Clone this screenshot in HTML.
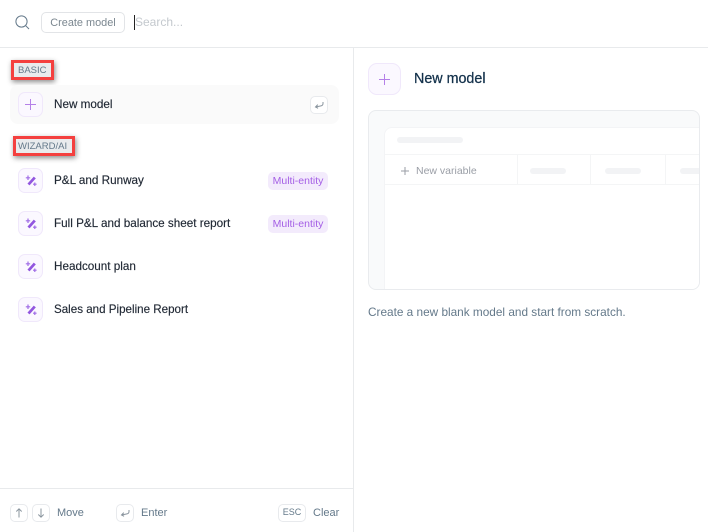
<!DOCTYPE html>
<html><head><meta charset="utf-8">
<style>
html,body{margin:0;padding:0;background:#fff}
#p{position:relative;width:708px;height:532px;overflow:hidden;background:#fff;font-family:"Liberation Sans",sans-serif;color:#1f2733}
#p div,#p svg{position:absolute}
.t{white-space:nowrap;line-height:16px;font-size:11.7px;-webkit-text-stroke:.15px currentColor}
.ic{left:18px;width:25px;height:25px;box-sizing:border-box;border:1px solid #f0e8fb;border-radius:7px;background:#fbf8ff}
.tag{left:268px;width:60px;height:18px;border-radius:5px;background:#f3ebfc;color:#a45ee5;font-size:10.5px;line-height:18px;text-align:center;white-space:nowrap}
.key{box-sizing:border-box;border:1px solid #e8eaed;border-radius:5px;background:#fff;height:18px}
.gr{color:#64798a}
.f{font-size:11px;-webkit-text-stroke:0}
.lab{font-size:9.5px;color:#64798a;white-space:nowrap;background:#e9ebed;line-height:15px}
.red{box-sizing:border-box;border:3px solid #f4403f;box-shadow:1px 2px 5px rgba(0,0,0,.45)}
.sk{background:#f2f3f5;border-radius:3px;height:6px}
</style></head><body><div id="p">

<svg style="left:14px;top:14px" width="17" height="17" viewBox="0 0 17 17" fill="none" stroke="#64798a" stroke-width="1"><circle cx="7.500" cy="7.500" r="5.600"/><path d="M11.700 11.700L15 15"/></svg>
<div class="t" style="left:41px;top:12px;width:84px;height:21px;box-sizing:border-box;border:1px solid #e2e4e7;border-radius:5px;font-size:10.900px;line-height:20px;text-align:center;color:#7b8790;-webkit-text-stroke:0">Create model</div>
<div style="left:134px;top:15px;width:1px;height:15px;background:#222"></div>
<div class="t" style="left:135px;top:14px;font-size:12px;color:#c4c9ce;-webkit-text-stroke:0">Search...</div>
<div style="left:0;top:47px;width:708px;height:1px;background:#e8eaec"></div>
<div style="left:353px;top:48px;width:1px;height:484px;background:#e8eaec"></div>
<div style="left:0;top:488px;width:353px;height:1px;background:#e8eaec"></div>

<div class="red" style="left:11px;top:60px;width:43px;height:20px"></div>
<div class="lab" style="left:14px;top:63px;width:37px;height:14px;text-indent:4px">BASIC</div>
<div style="left:10px;top:85px;width:329px;height:39px;background:#fafafa;border-radius:8px"></div>
<div class="ic" style="top:92px"></div>
<svg style="left:18px;top:92px" width="25" height="25" fill="none" stroke="#b580e8" stroke-width="1"><path d="M12.500 7v11M7 12.500h11"/></svg>
<div class="t" style="left:54px;top:97px">New model</div>
<div class="key" style="left:310px;top:96px;width:18px"></div>
<svg style="left:310px;top:96px" width="18" height="18" fill="none" stroke="#8a959e" stroke-width="1"><path d="M13 6v1.500q0 2-2 2.400L5.500 11M7.800 8.600L5.500 11l2.600 1.300"/></svg>

<div class="red" style="left:13px;top:136px;width:62px;height:20px"></div>
<div class="lab" style="left:16px;top:139px;width:56px;height:14px;text-indent:2px">WIZARD/AI</div>

<div class="ic" style="top:168px"></div>
<svg style="left:18px;top:168px" width="25" height="25" fill="none"><path d="M10.500 16.500L16.800 9.500" stroke="#9256df" stroke-width="2.800"/><path d="M10 7.500v4.500M7.800 9.800h4.400M16.800 14.500v3.500M15 16.200h3.600" stroke="#a06ce6" stroke-width="1.200"/></svg>
<div class="t" style="left:54px;top:173px">P&amp;L and Runway</div>
<div class="tag" style="top:172px">Multi-entity</div>

<div class="ic" style="top:211px"></div>
<svg style="left:18px;top:211px" width="25" height="25" fill="none"><path d="M10.500 16.500L16.800 9.500" stroke="#9256df" stroke-width="2.800"/><path d="M10 7.500v4.500M7.800 9.800h4.400M16.800 14.500v3.500M15 16.200h3.600" stroke="#a06ce6" stroke-width="1.200"/></svg>
<div class="t" style="left:54px;top:216px">Full P&amp;L and balance sheet report</div>
<div class="tag" style="top:215px">Multi-entity</div>

<div class="ic" style="top:254px"></div>
<svg style="left:18px;top:254px" width="25" height="25" fill="none"><path d="M10.500 16.500L16.800 9.500" stroke="#9256df" stroke-width="2.800"/><path d="M10 7.500v4.500M7.800 9.800h4.400M16.800 14.500v3.500M15 16.200h3.600" stroke="#a06ce6" stroke-width="1.200"/></svg>
<div class="t" style="left:54px;top:259px">Headcount plan</div>

<div class="ic" style="top:297px"></div>
<svg style="left:18px;top:297px" width="25" height="25" fill="none"><path d="M10.500 16.500L16.800 9.500" stroke="#9256df" stroke-width="2.800"/><path d="M10 7.500v4.500M7.800 9.800h4.400M16.800 14.500v3.500M15 16.200h3.600" stroke="#a06ce6" stroke-width="1.200"/></svg>
<div class="t" style="left:54px;top:302px;font-size:11.600px">Sales and Pipeline Report</div>

<div class="key" style="left:10px;top:504px;width:18px"></div>
<svg style="left:10px;top:504px" width="18" height="18" fill="none" stroke="#8a959e" stroke-width="1"><path d="M9 13.500V4.800M6.300 7.500L9 4.800l2.700 2.700"/></svg>
<div class="key" style="left:32px;top:504px;width:18px"></div>
<svg style="left:32px;top:504px" width="18" height="18" fill="none" stroke="#8a959e" stroke-width="1"><path d="M9 4.500v8.700M6.300 10.500L9 13.200l2.700-2.700"/></svg>
<div class="t gr f" style="left:57px;top:505px">Move</div>
<div class="key" style="left:116px;top:504px;width:18px"></div>
<svg style="left:116px;top:504px" width="18" height="18" fill="none" stroke="#8a959e" stroke-width="1"><path d="M13 6v1.500q0 2-2 2.400L5.500 11M7.800 8.600L5.500 11l2.600 1.300"/></svg>
<div class="t gr f" style="left:141px;top:505px">Enter</div>
<div class="key" style="left:278px;top:504px;width:28px;font-size:9px;line-height:14px;text-align:center;color:#64798a">ESC</div>
<div class="t gr f" style="left:313px;top:505px">Clear</div>

<div class="ic" style="left:368px;top:63px;width:33px;height:32px;border-radius:9px"></div>
<svg style="left:368px;top:63px" width="33" height="32" fill="none" stroke="#b580e8" stroke-width="1"><path d="M16.500 11v11M11 16.500h11"/></svg>
<div class="t" style="left:414px;top:71px;font-size:14.300px;color:#12304a;-webkit-text-stroke:.25px #12304a">New model</div>

<div style="left:368px;top:110px;width:332px;height:180px;box-sizing:border-box;border:1px solid #e9ebee;border-radius:8px;background:#f9fafb;overflow:hidden">
  <div style="left:15px;top:16px;width:320px;height:170px;background:#fff;border:1px solid #f3f4f6;border-radius:8px 0 0 0;box-sizing:border-box"></div>
  <div class="sk" style="left:28px;top:26px;width:66px"></div>
  <div style="left:16px;top:43px;width:316px;height:1px;background:#f4f5f6"></div>
  <div style="left:16px;top:73px;width:316px;height:1px;background:#f4f5f6"></div>
  <div style="left:148px;top:43px;width:1px;height:30px;background:#f4f5f6"></div>
  <div style="left:221px;top:43px;width:1px;height:30px;background:#f4f5f6"></div>
  <div style="left:296px;top:43px;width:1px;height:30px;background:#f4f5f6"></div>
  <svg style="left:31px;top:55px" width="10" height="10" stroke="#9a9ea6" stroke-width="1"><path d="M5 1v8M1 5h8"/></svg>
  <div class="t" style="left:47px;top:52px;font-size:10.500px;color:#9a9ea6;-webkit-text-stroke:0">New variable</div>
  <div class="sk" style="left:161px;top:57px;width:36px"></div>
  <div class="sk" style="left:236px;top:57px;width:36px"></div>
  <div class="sk" style="left:311px;top:57px;width:36px"></div>
</div>
<div class="t" style="left:368px;top:304px;font-size:11.800px;color:#64798a;-webkit-text-stroke:0">Create a new blank model and start from scratch.</div>
</div></body></html>
